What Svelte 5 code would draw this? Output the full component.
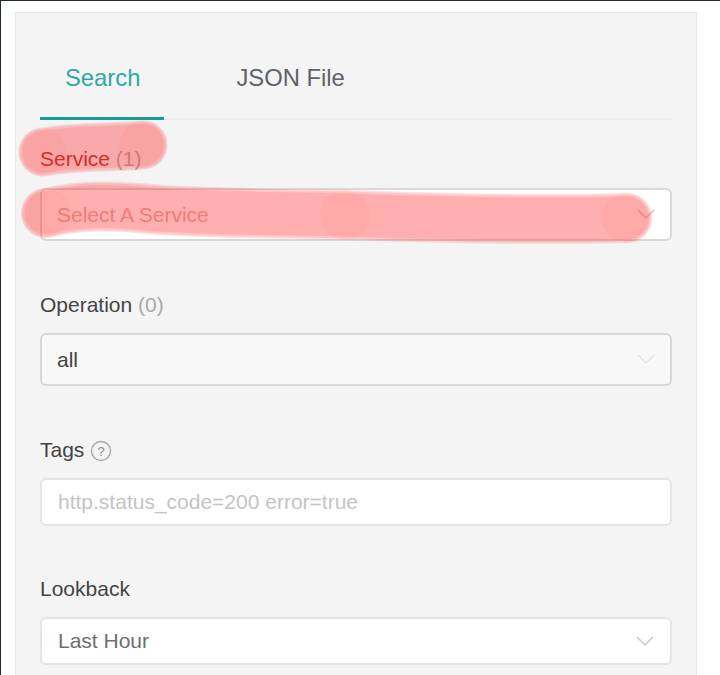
<script>
	const chevron = 'M1 1l8 8l8-8';
	const strokeA = 'M43 152C75 146 110 148 143 145';
	const strokeB = 'M46 213C80 205 110 205 150 209S300 214 345 215S500 221 627 218';
</script>

<div class="page">
	<section class="panel">
		<nav class="tabs">
			<div class="tab active">Search</div>
			<div class="tab">JSON File</div>
		</nav>

		<form on:submit|preventDefault>
			<div class="field service">
				<div class="label">Service <span class="count">(1)</span></div>
				<div class="select tall">
					<span class="placeholder">Select A Service</span>
					<svg class="arrow" width="18" height="11" viewBox="0 0 18 11"><path d={chevron} /></svg>
				</div>
			</div>

			<div class="field operation">
				<div class="label">Operation <span class="count">(0)</span></div>
				<div class="select tall disabled">
					<span class="value">all</span>
					<svg class="arrow" width="18" height="11" viewBox="0 0 18 11"><path d={chevron} /></svg>
				</div>
			</div>

			<div class="field tags">
				<div class="label">Tags <svg class="help" width="22" height="22" viewBox="0 0 22 22">
						<circle cx="11" cy="11" r="9.5" />
						<text x="11" y="15.5" text-anchor="middle">?</text>
					</svg></div>
				<input type="text" placeholder="http.status_code=200 error=true" />
			</div>

			<div class="field lookback">
				<div class="label">Lookback</div>
				<div class="select">
					<span class="current">Last Hour</span>
					<svg class="arrow" width="18" height="11" viewBox="0 0 18 11"><path d={chevron} /></svg>
				</div>
			</div>
		</form>
	</section>

	<!-- red scribble on top of the service field -->
	<svg class="scribble" width="720" height="675" viewBox="0 0 720 675">
		<g class="band">
			<path d={strokeA} stroke-width="49" />
			<path d={strokeA} stroke-width="46" />
			<path d={strokeA} stroke-width="42" />
			<path d={strokeB} stroke-width="50" />
			<path d={strokeB} stroke-width="47" />
			<path d={strokeB} stroke-width="43" />
		</g>
		<g class="dabs">
			<circle cx="42" cy="152" r="24" />
			<circle cx="143" cy="145" r="24" />
			<circle cx="46" cy="213" r="25" />
			<circle cx="345" cy="215" r="25" />
			<circle cx="627" cy="218" r="25" />
		</g>
	</svg>
</div>

<style>
	:global(body) {
		background: #fff;
	}

	.page {
		position: relative;
		box-sizing: border-box;
		height: 675px;
		overflow: hidden;
		border-top: 1px solid #1f2933;
		border-left: 1px solid #1f2933;
		padding: 11px 0 0 14px;
		font-family: "Liberation Sans", Arial, sans-serif;
		color: #4a4a4a;
	}

	.panel {
		box-sizing: border-box;
		width: 682px;
		height: 700px;
		background: #f4f4f4;
		border: 1px solid #e6e6e6;
		padding: 0 24px;
	}

	.tabs {
		display: flex;
		gap: 47px;
		height: 107px;
		width: 632px;
		border-bottom: 2px solid #ebebeb;
		box-sizing: border-box;
	}

	.tab {
		box-sizing: border-box;
		height: 107px;
		padding: 50px 24px 0 25px;
		font-size: 23.8px;
		line-height: 30px;
		color: #5f6368;
	}

	.tab.active {
		color: #2fa8a8;
		border-bottom: 3px solid #139d96;
	}

	.label {
		font-size: 21px;
		line-height: 28px;
		height: 28px;
		color: #444;
	}

	.service .label {
		color: #b02020;
		margin-bottom: 15px;
	}

	.count {
		color: #a9a9a9;
	}

	.help {
		vertical-align: -5px;
	}

	.field.service { margin-top: 25px; }
	.field.operation { margin-top: 50px; }
	.field.tags { margin-top: 50px; }
	.field.lookback { margin-top: 49px; }

	.select, input {
		display: flex;
		align-items: center;
		justify-content: space-between;
		box-sizing: border-box;
		width: 632px;
		height: 48px;
		margin-top: 14px;
		padding: 0 16px;
		background: #fff;
		border: 2px solid #e4e4e4;
		border-radius: 6px;
		font-family: inherit;
		font-size: 21px;
		outline: none;
	}

	.select.tall {
		height: 53px;
		border-color: #d8d8d8;
		padding: 0 15px;
	}

	.select.disabled {
		background: #f8f8f8;
	}

	.placeholder {
		color: #e4a6a6;
	}

	.value {
		color: #444;
	}

	.current {
		color: #6f6f6f;
	}

	input::placeholder {
		color: #c4c4c4;
		opacity: 1;
	}

	.arrow path {
		fill: none;
		stroke: #c8c8c8;
		stroke-width: 1.5;
	}

	.disabled .arrow path {
		stroke: #e6e6e6;
	}

	.help circle {
		fill: none;
		stroke: #a8a8a8;
		stroke-width: 1.4;
	}

	.help text {
		font-size: 13px;
		fill: #8c8c8c;
	}

	.scribble {
		position: absolute;
		left: -1px;
		top: -1px;
		pointer-events: none;
		filter: blur(0.6px);
	}

	.band path {
		fill: none;
		stroke: #ff4040;
		stroke-opacity: 0.17;
		stroke-linecap: round;
	}

	.dabs circle {
		fill: #ff4040;
		fill-opacity: 0.05;
	}
</style>
